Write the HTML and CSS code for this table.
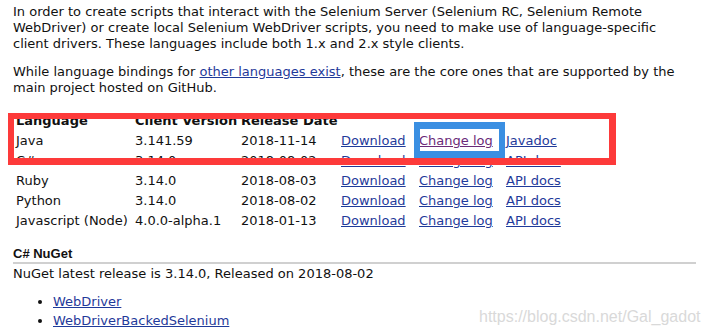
FILE: index.html
```html
<!DOCTYPE html>
<html>
<head>
<meta charset="utf-8">
<link rel="stylesheet" href="styles.css">
</head>
<body>
<div class="page">
  <p class="para">In order to create scripts that interact with the Selenium Server (Selenium RC, Selenium Remote WebDriver) or create local Selenium WebDriver scripts, you need to make use of language-specific client drivers. These languages include both 1.x and 2.x style clients.</p>
  <p class="para">While language bindings for <a href="#" class="lnk">other languages exist</a>, these are the core ones that are supported by the main project hosted on GitHub.</p>
  <div class="tablewrap">
    <table class="langs">
      <colgroup>
        <col class="c1"><col class="c2"><col class="c3"><col class="c4"><col class="c5"><col class="c6">
      </colgroup>
      <tr class="head"><th>Language</th><th>Client Version</th><th>Release Date</th><th></th><th></th><th></th></tr>
      <tr><td>Java</td><td>3.141.59</td><td>2018-11-14</td><td><a href="#" class="lnk">Download</a></td><td><a href="#" class="lnk visited">Change log</a></td><td><a href="#" class="lnk">Javadoc</a></td></tr>
      <tr><td>C#</td><td>3.14.0</td><td>2018-08-02</td><td><a href="#" class="lnk">Download</a></td><td><a href="#" class="lnk">Change log</a></td><td><a href="#" class="lnk">API docs</a></td></tr>
      <tr><td>Ruby</td><td>3.14.0</td><td>2018-08-03</td><td><a href="#" class="lnk">Download</a></td><td><a href="#" class="lnk">Change log</a></td><td><a href="#" class="lnk">API docs</a></td></tr>
      <tr><td>Python</td><td>3.14.0</td><td>2018-08-02</td><td><a href="#" class="lnk">Download</a></td><td><a href="#" class="lnk">Change log</a></td><td><a href="#" class="lnk">API docs</a></td></tr>
      <tr><td>Javascript (Node)</td><td>4.0.0-alpha.1</td><td>2018-01-13</td><td><a href="#" class="lnk">Download</a></td><td><a href="#" class="lnk">Change log</a></td><td><a href="#" class="lnk">API docs</a></td></tr>
    </table>
    <div class="redbox"></div>
    <div class="bluebox"></div>
  </div>
  <h3 class="sub">C# NuGet</h3>
  <p class="nuget">NuGet latest release is 3.14.0, Released on 2018-08-02</p>
  <ul class="list">
    <li><a href="#" class="lnk">WebDriver</a></li>
    <li><a href="#" class="lnk">WebDriverBackedSelenium</a></li>
    <li><a href="#" class="lnk">Support</a></li>
  </ul>
  <div class="watermark">https://blog.csdn.net/Gal_gadot</div>
</div>
</body>
</html>
```

FILE: styles.css
```css
html, body {
  margin: 0;
  padding: 0;
  background: #fff;
  overflow: hidden;
}
.page {
  position: relative;
  padding: 4px 0 0 13px;
  width: 683px;
  font-family: "DejaVu Sans", Verdana, sans-serif;
  font-size: 13px;
  line-height: 16px;
  color: #111;
}
.para {
  margin: 0 0 12px 0;
  width: 680px;
}
.lnk {
  color: #1f3a9a;
  text-decoration: underline;
}
.lnk.visited {
  color: #6a2a78;
}
.tablewrap {
  position: relative;
  margin-top: 15px;
}
.langs {
  border-collapse: collapse;
  font-size: 13px;
}
.langs th, .langs td {
  padding: 0 0 0 3px;
  height: 20px;
  line-height: 20px;
  text-align: left;
  white-space: nowrap;
  vertical-align: middle;
}
.langs th {
  font-weight: bold;
}
.c1 { width: 119px; }
.c2 { width: 106px; }
.c3 { width: 100px; }
.c4 { width: 78px; }
.c5 { width: 87px; }
.c6 { width: 90px; }
.redbox {
  position: absolute;
  left: -5px;
  top: 2px;
  width: 595px;
  height: 39px;
  border: 7px solid #fd3a3a;
  border-top-width: 6px;
  border-left-width: 6px;
}
.bluebox {
  position: absolute;
  left: 401px;
  top: 11px;
  width: 79px;
  height: 22px;
  border: 7px solid #3a8fe2;
  border-left-width: 6px;
  border-right-width: 6px;
}
.sub {
  margin: 15px 0 0 0;
  font-family: "Liberation Sans", Arial, sans-serif;
  font-size: 13px;
  font-weight: bold;
  line-height: 16px;
  padding-bottom: 0;
  border-bottom: 2px solid #d0d0d0;
  width: 683px;
}
.nuget {
  margin: 2px 0 0 0;
}
.list {
  margin: 10px 0 0 0;
  padding-left: 40px;
  line-height: 19px;
}
.watermark {
  position: absolute;
  left: 479px;
  top: 309px;
  font-family: "Liberation Sans", Arial, sans-serif;
  font-size: 16px;
  color: #d9d9d9;
  white-space: nowrap;
}
```
